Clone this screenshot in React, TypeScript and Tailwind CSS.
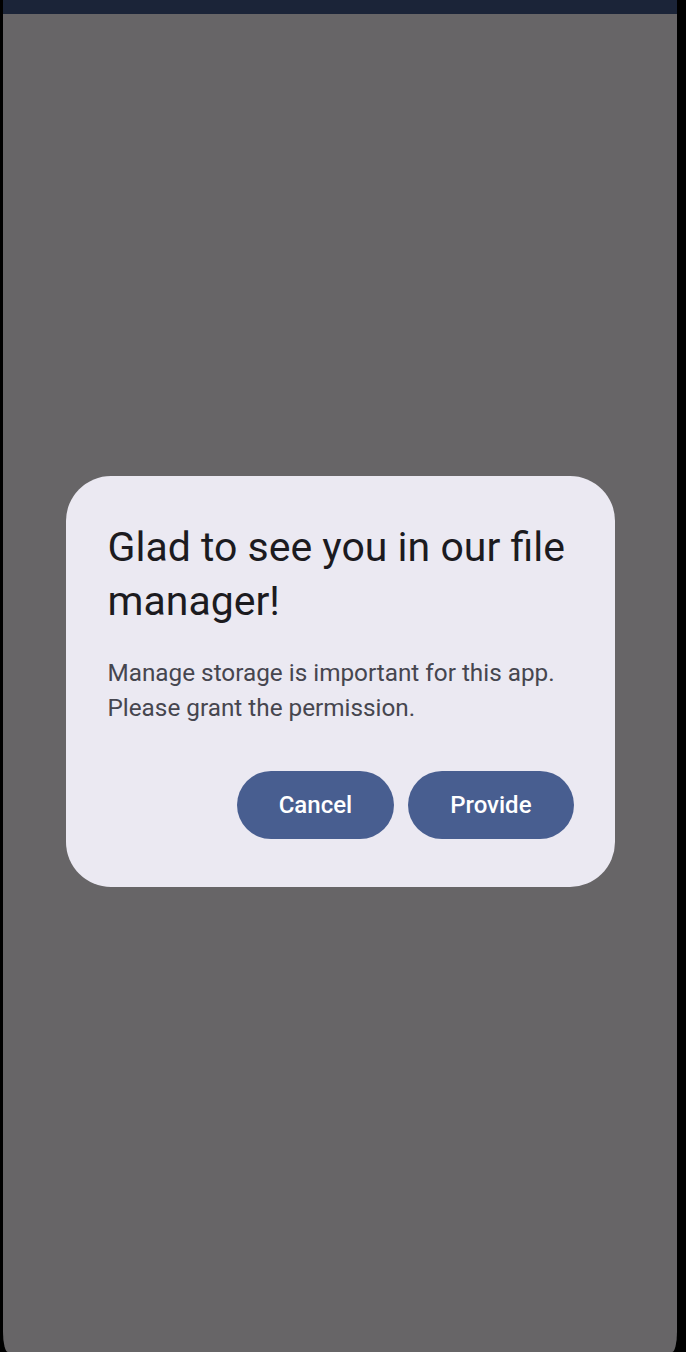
export default function App() {
  return (
    <div className="w-[686px] h-[1352px] bg-black flex" style={{ fontFamily: 'Roboto, "Noto Sans", sans-serif' }}>
      <div className="ml-[3px] w-[674px] h-full flex flex-col rounded-bl-[5px_20px] rounded-br-[5px_20px] overflow-hidden">
        <div className="h-[14px] bg-[#1b2438]" />
        <div className="flex-1 bg-[#676567] flex items-center justify-center pb-[3px]">
          <div className="w-[549px] h-[411px] bg-[#ebe9f2] rounded-[45px] pl-[42px] pr-[41px] pt-[44px] pb-[48px] flex flex-col">
            <h1 className="text-[41px] leading-[54px] text-[#1c1b1f]">Glad to see you in our file manager!</h1>
            <p className="mt-[27px] text-[24.3px] leading-[35px] text-[#46464f]">
              Manage storage is important for this app. Please grant the permission.
            </p>
            <div className="mt-auto flex justify-end gap-[14px]">
              <button className="h-[68px] px-[42px] rounded-full bg-[#485e90] text-white text-[24px] font-medium">Cancel</button>
              <button className="h-[68px] px-[42px] rounded-full bg-[#485e90] text-white text-[24px] font-medium">Provide</button>
            </div>
          </div>
        </div>
      </div>
    </div>
  );
}
